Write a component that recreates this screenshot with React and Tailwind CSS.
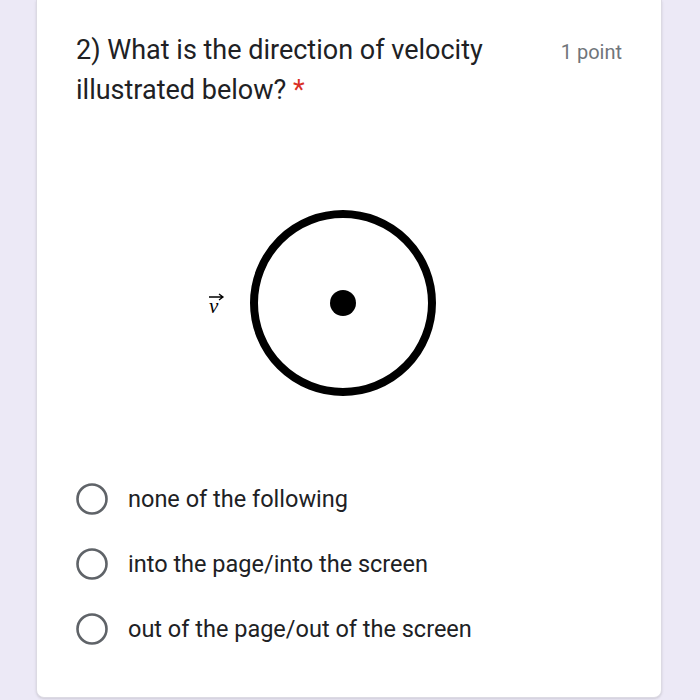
import React from 'react';

const options = [
  'none of the following',
  'into the page/into the screen',
  'out of the page/out of the screen',
];

const Radio = () => (
  <svg width="34" height="34" viewBox="0 0 34 34" className="shrink-0">
    <circle cx="17" cy="17" r="14.5" fill="none" stroke="#5f6368" strokeWidth="2.6" />
  </svg>
);

const App = () => {
  return (
    <div
      className="w-[700px] h-[700px] bg-[#ece9f6] overflow-hidden"
      style={{ fontFamily: 'Roboto, "Liberation Sans", sans-serif' }}
    >
      <div className="ml-[36px] w-[626px] h-[698px] bg-white rounded-b-lg border-x border-b border-[#dcdae3] shadow-sm">
        {/* Question header */}
        <div className="flex justify-between pl-[39px] pr-[39px] pt-[30px]">
          <h2 className="text-[27px] leading-[40px] text-[#202124] w-[440px]">
            2) What is the direction of velocity illustrated below?{' '}
            <span className="text-[#d93025]">*</span>
          </h2>
          <span className="text-[20px] leading-[44px] text-[#70757a]">1 point</span>
        </div>

        {/* Illustration */}
        <div className="mt-[90px] ml-[144px]">
          <svg width="280" height="210" viewBox="0 0 280 210">
            <text
              x="28"
              y="113"
              fontFamily='"Liberation Serif", "DejaVu Serif", serif'
              fontStyle="italic"
              fontSize="21"
              fill="#000"
            >
              v
            </text>
            <path d="M28 97 L41 97 M38 94 L42 97 L38 100" fill="none" stroke="#000" strokeWidth="1.3" />
            <circle cx="162" cy="103" r="89" fill="none" stroke="#000" strokeWidth="8" />
            <circle cx="162" cy="103" r="13" fill="#000" />
          </svg>
        </div>

        {/* Options */}
        <div className="mt-[72px] pl-[38px] flex flex-col gap-[31px]">
          {options.map((o) => (
            <div key={o} className="flex items-center gap-[19px]">
              <Radio />
              <span className="text-[23.5px] leading-[34px] text-[#202124]">{o}</span>
            </div>
          ))}
        </div>
      </div>
    </div>
  );
};

export default App;
